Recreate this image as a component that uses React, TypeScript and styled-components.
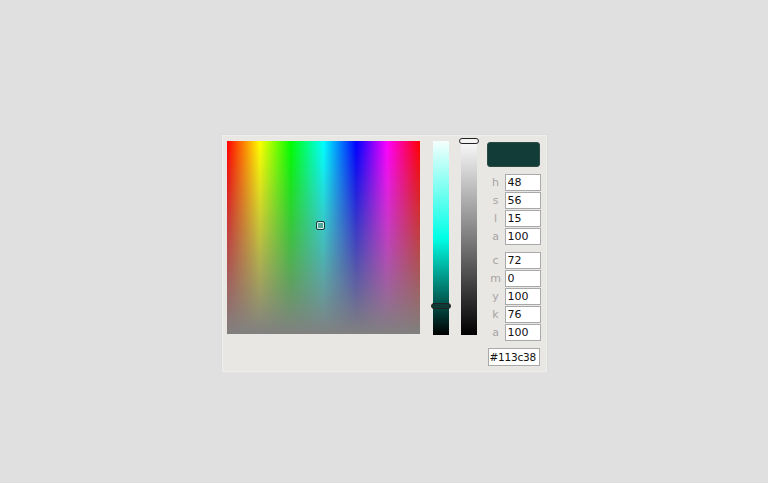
import React from 'react';
import styled, { createGlobalStyle } from 'styled-components';

const GlobalStyle = createGlobalStyle`
  html, body {
    margin: 0;
    padding: 0;
    background: #e0e0e0;
    font-family: "DejaVu Sans", Verdana, sans-serif;
  }
`;

const Page = styled.div`
  display: flex;
  justify-content: center;
  padding-top: 135px;
`;

const Panel = styled.div`
  display: flex;
  align-items: flex-start;
  width: 325px;
  box-sizing: border-box;
  padding: 5px 6px 5px 4px;
  background: #e9e7e4;
  border: 1px solid #efeeec;
  box-shadow: 0 0 0 1px #dcdcdc;
`;

const Spectrum = styled.div`
  position: relative;
  width: 193px;
  height: 193px;
  flex-shrink: 0;
  background:
    linear-gradient(to bottom, rgba(128, 128, 128, 0), rgb(128, 128, 128)),
    linear-gradient(to right, #ff0000, #ffff00 17%, #00ff00 33%, #00ffff 50%, #0000ff 67%, #ff00ff 83%, #ff0000);
`;

const Marker = styled.div`
  position: absolute;
  left: 89px;
  top: 80px;
  width: 7px;
  height: 7px;
  border: 1px solid #1c3a36;
  border-radius: 2px;
  box-shadow: inset 0 0 0 1px #d8f0ec;
  background: #52a79c;
`;

const Slider = styled.div<{ $bg: string; $gap: number }>`
  position: relative;
  width: 16px;
  height: 194px;
  flex-shrink: 0;
  margin-left: ${p => p.$gap}px;
  background: ${p => p.$bg};
`;

const Thumb = styled.div<{ $top: number; $fill: string }>`
  position: absolute;
  left: -2px;
  right: -2px;
  top: ${p => p.$top}px;
  height: 4px;
  border: 1px solid #222;
  border-radius: 3px;
  background: ${p => p.$fill};
`;

const Side = styled.div`
  display: flex;
  flex-direction: column;
  align-items: flex-end;
  width: 54px;
  margin-left: 10px;
`;

const Swatch = styled.div<{ $color: string }>`
  width: 53px;
  height: 25px;
  margin-top: 1px;
  align-self: flex-start;
  box-sizing: border-box;
  border: 1px solid #2b4a46;
  border-radius: 3px;
  background: ${p => p.$color};
`;

const Group = styled.div`
  display: flex;
  flex-direction: column;
  gap: 1px;
  margin-top: 7px;
  width: 100%;
`;

const Row = styled.div`
  display: flex;
  align-items: center;
  height: 17px;
`;

const Label = styled.span`
  width: 18px;
  text-align: center;
  font-size: 11px;
  color: #a6a4a2;
`;

const Field = styled.input<{ $w: number }>`
  width: ${p => p.$w}px;
  height: 17px;
  box-sizing: border-box;
  padding: 0 2px;
  margin: 0;
  border: 1px solid #a9a9a9;
  background: #fff;
  font-family: "DejaVu Sans", Verdana, sans-serif;
  font-size: 11px;
  color: #111;
  outline: none;
`;

const HexField = styled(Field)`
  margin-top: 7px;
  height: 18px;
  margin-right: 1px;
  padding: 0 1px;
  font-size: 10.5px;
  letter-spacing: -0.2px;
`;

const hsl = [
  ['h', '48'],
  ['s', '56'],
  ['l', '15'],
  ['a', '100'],
];

const cmyk = [
  ['c', '72'],
  ['m', '0'],
  ['y', '100'],
  ['k', '76'],
  ['a', '100'],
];

const App: React.FC = () => (
  <>
    <GlobalStyle />
    <Page>
      <Panel>
        <Spectrum>
          <Marker />
        </Spectrum>
        <Slider $gap={13} $bg="linear-gradient(to bottom, #f4fffd, #00ffe6 50%, #000)">
          <Thumb $top={162} $fill="#0f3a35" />
        </Slider>
        <Slider $gap={12} $bg="linear-gradient(to bottom, #fafafa, #000)">
          <Thumb $top={-3} $fill="#f4f4f4" />
        </Slider>
        <Side>
          <Swatch $color="#113c38" />
          <Group>
            {hsl.map(([k, v]) => (
              <Row key={k}>
                <Label>{k}</Label>
                <Field $w={36} value={v} readOnly />
              </Row>
            ))}
          </Group>
          <Group>
            {cmyk.map(([k, v], i) => (
              <Row key={k + i}>
                <Label>{k}</Label>
                <Field $w={36} value={v} readOnly />
              </Row>
            ))}
          </Group>
          <HexField $w={52} value="#113c38" readOnly />
        </Side>
      </Panel>
    </Page>
  </>
);

export default App;
